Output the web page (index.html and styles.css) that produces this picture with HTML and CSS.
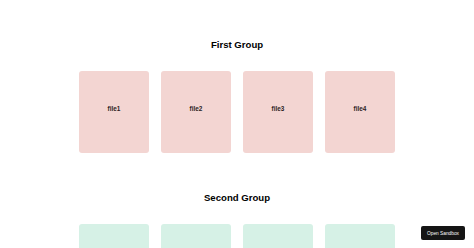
FILE: index.html
```html
<!DOCTYPE html>
<html>
<head>
<meta charset="utf-8">
<link rel="stylesheet" href="styles.css">
</head>
<body>
<main class="page">
  <section class="group">
    <h2 class="group-title">First Group</h2>
    <div class="grid">
      <div class="card card-pink">file1</div>
      <div class="card card-pink">file2</div>
      <div class="card card-pink">file3</div>
      <div class="card card-pink">file4</div>
    </div>
  </section>
  <section class="group">
    <h2 class="group-title">Second Group</h2>
    <div class="grid">
      <div class="card card-green">file5</div>
      <div class="card card-green">file6</div>
      <div class="card card-green">file7</div>
      <div class="card card-green">file8</div>
    </div>
  </section>
</main>
<a class="sandbox-btn">Open Sandbox</a>
</body>
</html>
```
FILE: styles.css
```css
html, body {
  margin: 0;
  padding: 0;
  background: #ffffff;
  font-family: "Liberation Sans", Arial, sans-serif;
  color: #111;
}
.page {
  padding-top: 39px;
  display: flex;
  flex-direction: column;
  gap: 39px;
}
.group {
  display: flex;
  flex-direction: column;
  align-items: center;
}
.group-title {
  margin: 0 0 20px 0;
  font-size: 9.6px;
  line-height: 12px;
  font-weight: 700;
  color: #000;
}
.grid {
  display: grid;
  grid-template-columns: repeat(4, 70px);
  gap: 12px;
}
.card {
  box-sizing: border-box;
  height: 82px;
  padding-bottom: 8px;
  border-radius: 3px;
  display: flex;
  align-items: center;
  justify-content: center;
  font-size: 6.4px;
  font-weight: 700;
  color: #2a2222;
}
.card-pink {
  background: #f3d5d2;
}
.card-green {
  background: #d6f1e6;
}
.sandbox-btn {
  position: fixed;
  right: 9px;
  bottom: 8px;
  width: 44px;
  height: 14px;
  background: #151515;
  color: #fff;
  border-radius: 2px;
  font-size: 4.8px;
  display: flex;
  align-items: center;
  justify-content: center;
}
```
